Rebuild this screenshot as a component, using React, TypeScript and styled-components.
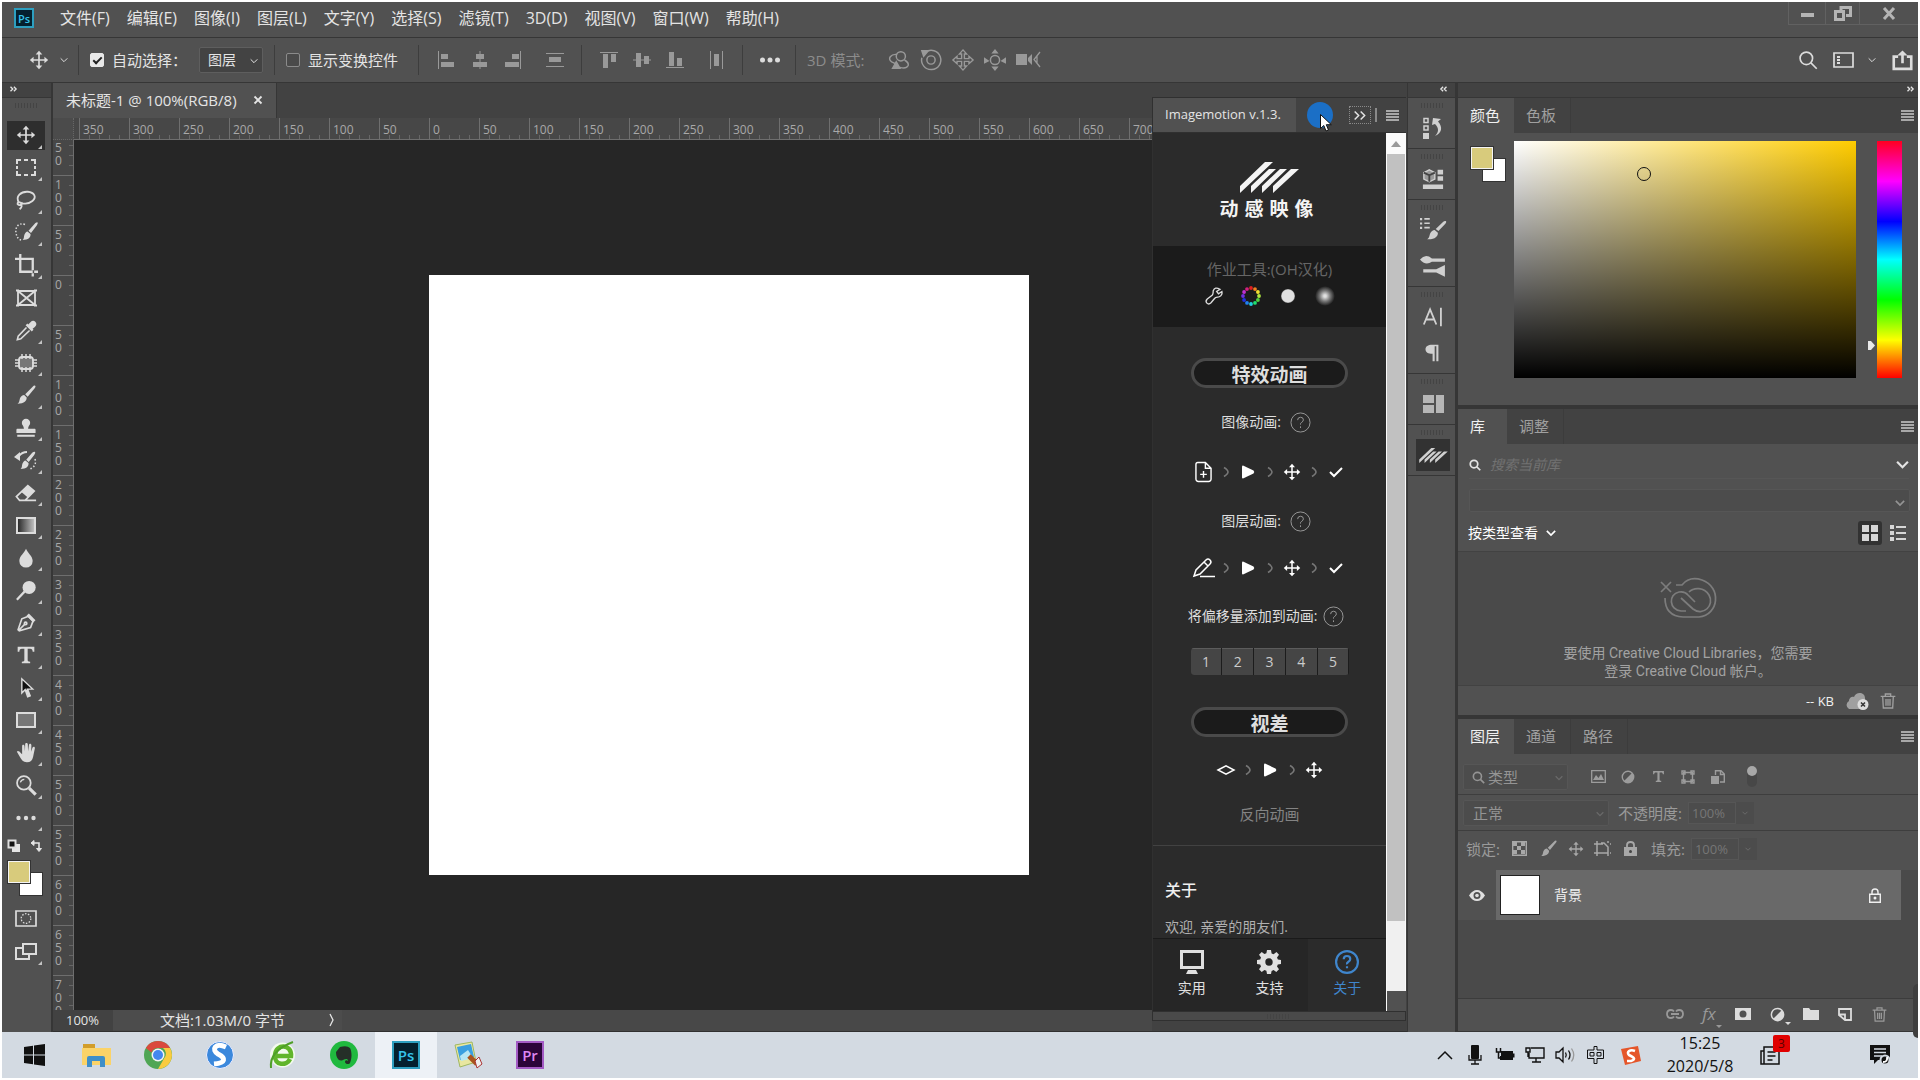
import React from 'react';
import styled, { createGlobalStyle, css } from 'styled-components';

const c = {
  base: '#515151',
  dark: '#424242',
  line: '#363636',
  deep: '#4a4a4a',
  canvas: '#262626',
  text: '#e4e4e4',
  dim: '#9a9a9a',
  faint: '#808080',
  swatch: '#d8cb7c',
};

const Global = createGlobalStyle`
  *, *::before, *::after { box-sizing: border-box; }
  html, body, #root { height: 100%; }
  body {
    margin: 0;
    background: #fff;
    color: ${c.text};
    font: 14px/20px "Open Sans", "Noto Sans CJK SC", sans-serif;
    overflow: hidden;
  }
  button, input, select { font: inherit; color: inherit; margin: 0; padding: 0; border: 0; background: none; border-radius: 0; }
  svg { display: block; flex: none; overflow: visible; }
`;

/* ---------- icon plumbing ---------- */
type IcoProps = { w?: number; h?: number; vb?: string; children: React.ReactNode; stroke?: boolean; sw?: number };
const Ico = ({ w = 20, h, vb = '0 0 24 24', children, stroke, sw = 2 }: IcoProps) => (
  <svg
    width={w}
    height={h ?? w}
    viewBox={vb}
    fill={stroke ? 'none' : 'currentColor'}
    stroke={stroke ? 'currentColor' : 'none'}
    strokeWidth={sw}
    aria-hidden="true"
  >
    {children}
  </svg>
);

const MoveIcon = ({ size = 20 }) => (
  <Ico w={size}>
    <path d="M12 1l4 4.500h-3V11h5.500V8l4.500 4-4.500 4v-3H13v5.500h3L12 23l-4-4.500h3V13H5.500v3L1 12l4.500-4v3H11V5.500H8z" />
  </Ico>
);
const SearchIcon = ({ size = 18, sw = 2 }) => (
  <Ico w={size} stroke sw={sw}>
    <circle cx="10" cy="10" r="7.500" />
    <path d="M15.500 15.500l7 7" />
  </Ico>
);
const Chevron = ({ size = 10, sw = 2 }) => (
  <Ico w={size} vb="0 0 12 12" stroke sw={sw}>
    <path d="M1 3.500l5 5 5-5" />
  </Ico>
);
const MenuIcon = () => (
  <Ico w={13} h={11} vb="0 0 13 11">
    <path d="M0 0h13v2H0zM0 3h13v2H0zM0 6h13v2H0zM0 9h13v2H0z" />
  </Ico>
);
const Double = ({ left = false, size = 7, sw = 1.8 }) => (
  <Ico w={size} h={size - 1} vb="0 0 9 8" stroke sw={sw}>
    {left ? <path d="M4 1L1 4l3 3M8.500 1l-3 3 3 3" /> : <path d="M.5 1l3 3-3 3M5 1l3 3-3 3" />}
  </Ico>
);
const BrushIcon = ({ size = 22 }) => (
  <Ico w={size}>
    <path d="M23 1c.8.8.3 1.800-.6 3L14 14l-3-3 9-9c1-.9 2.200-1.700 3-1z" />
    <path d="M9.800 12l3 3c.3 3.500-2.600 7.500-11 7.500 2.500-1.500 2-3.500 3-6.500.8-2.500 3-4 5-4z" />
  </Ico>
);
const TypeIcon = ({ size = 20 }) => (
  <Ico w={size}>
    <path d="M2 2h20v6h-2c-.3-2.500-.8-3.500-3-3.500h-3V18c0 1.500.6 2 3 2v2H7v-2c2.400 0 3-.5 3-2V4.500H7C4.800 4.500 4.300 5.500 4 8H2z" />
  </Ico>
);
const TrashIcon = ({ size = 16 }) => (
  <Ico w={size} stroke>
    <path d="M1 5h22M8 5V1.500h8V5M4 5l1 17.500h14L20 5M9 9v10M12 9v10M15 9v10" />
  </Ico>
);
const AdjustIcon = ({ size = 15 }) => (
  <Ico w={size}>
    <path d="M12 1a11 11 0 100 22 11 11 0 000-22zm0 2.500c2.400 0 4.400.9 6 2.500L6 18A8.500 8.500 0 0112 3.500z" />
  </Ico>
);
const Stripes = ({ w = 59, h = 31 }) => (
  <Ico w={w} h={h} vb="0 0 59 31">
    <path d="M25 0h8L0 31v-7zM29 7h7L11 31v-7zM40 7h7L22 31v-7zM51 7h8L33 31v-7z" />
  </Ico>
);
const PlayIcon = () => (
  <Ico w={14} vb="0 0 14 14">
    <path d="M2 0.500L12.500 5.500Q14 7 12.500 8.500L2 13.500Q1 13.500 1 12.500V1.500Q1 .5 2 .5z" />
  </Ico>
);
const StepArrow = () => (
  <Ico w={6} h={10} vb="0 0 6 10" stroke sw={1.6}>
    <path d="M1 .5Q5 3 5 5T1 9.500" />
  </Ico>
);
const CheckIcon = () => (
  <Ico w={14} h={10} vb="0 0 14 10" stroke sw={2}>
    <path d="M1 5l4 4 8-8" />
  </Ico>
);
const FileAdd = () => (
  <Ico w={17} h={22} vb="0 0 18 22" stroke sw={1.5}>
    <path d="M3 1h8l6 6v11.500a2.500 2.500 0 01-2.500 2.500h-11A2.500 2.500 0 011 18.500V3a2 2 0 012-2zM11 1v6h6M9 10v7M5.500 13.500h7" />
  </Ico>
);
const PenLine = () => (
  <Ico w={22} h={20} vb="0 0 22 20" stroke sw={1.5}>
    <path d="M1 18l2-6L13 2q2-2 4 0t0 4L7 16zM11 4l4 4M7 18.500h15" />
  </Ico>
);
const Diamond = () => (
  <Ico w={18} h={10} vb="0 0 18 10" stroke sw={1.5}>
    <path d="M1 5l8-4.200L17 5 9 9.200z" />
  </Ico>
);
const Help = ({ size = 21, sw = 1 }) => (
  <Ico w={size} vb="0 0 22 22" stroke sw={sw}>
    <circle cx="11" cy="11" r="10" />
    <path d="M8 8.500q0-3 3-3t3 2.700q0 1.600-1.700 2.600T11 13.200M11 15v1.800" />
  </Ico>
);

/* ---------- shell ---------- */
const Screen = styled.div`
  height: 100vh;
  padding: 2px;
  display: flex;
  flex-direction: column;
`;
const MenuBar = styled.header`
  height: 36px;
  flex: none;
  display: flex;
  align-items: flex-start;
  background: ${c.base};
  border-bottom: 1px solid ${c.line};
`;
const PsLogo = styled.span<{ $size: number; $violet?: boolean }>`
  width: ${p => p.$size}px;
  height: ${p => p.$size}px;
  display: grid;
  place-items: center;
  flex: none;
  font-size: ${p => (p.$size > 22 ? 15 : 11)}px;
  line-height: 1;
  font-weight: 600;
  color: ${p => (p.$violet ? '#dd86f2' : '#35c3ea')};
  background: ${p => (p.$violet ? '#2b0539' : '#04202e')};
  border: 2px solid ${p => (p.$violet ? '#a35bc4' : '#2d9fc0')};
`;
const MenuNav = styled.nav`
  display: flex;
  gap: 17px;
  flex: 1;
  padding: 4px 0 0 14px;
  align-items: center;
`;
const LogoSlot = styled.div`
  padding: 6px 12px 0 12px;
`;
const MenuButton = styled.button`
  font-size: 16px;
  line-height: 24px;
  white-space: nowrap;
`;
const WinControls = styled.div`
  display: grid;
  grid-template-columns: 36px 34px 59px;
  height: 23px;
  color: #b4b4b4;
  border: 1px solid #616161;
  border-top: 0;
  border-right: 0;
`;
const WinButton = styled.button`
  display: grid;
  place-items: center;
  & + & { border-left: 1px solid #616161; }
`;

const Options = styled.div`
  height: 45px;
  flex: none;
  display: flex;
  align-items: center;
  padding: 0 0 0 26px;
  background: ${c.base};
  border-bottom: 1px solid ${c.line};
`;
const Divider = styled.span`
  width: 1px;
  height: 30px;
  background: #3d3d3d;
  flex: none;
`;
const IconButton = styled.button<{ $w?: number; $dim?: boolean }>`
  width: ${p => p.$w ?? 33}px;
  height: 24px;
  flex: none;
  display: grid;
  place-items: center;
  color: ${p => (p.$dim ? '#999' : '#dcdcdc')};
`;
const Tick = styled.label`
  display: flex;
  align-items: center;
  gap: 8px;
  font-size: 15px;
  white-space: nowrap;
`;
const Box = styled.input`
  appearance: none;
  width: 14px;
  height: 14px;
  border: 1px solid #8b8b8b;
  border-radius: 2px;
  background: #4a4a4a;
  display: grid;
  place-items: center;
  &:checked { background: #e8e8e8; border-color: #e8e8e8; }
  &:checked::after {
    content: '';
    width: 9px;
    height: 5px;
    border: solid #222;
    border-width: 0 0 2px 2px;
    transform: translateY(-1px) rotate(-45deg);
  }
`;
const SelectWrap = styled.span<{ $w: number; $h: number; $pad: number; $muted?: boolean }>`
  position: relative;
  display: block;
  width: ${p => p.$w}px;
  height: ${p => p.$h}px;
  flex: none;
  color: ${p => (p.$muted ? '#949494' : c.text)};
  & > select {
    appearance: none;
    display: block;
    width: 100%;
    height: 100%;
    padding: 0 20px 0 ${p => p.$pad}px;
    background: ${p => (p.$muted ? '#4c4c4c' : '#434343')};
    border: 1px solid ${p => (p.$muted ? '#565656' : '#5e5e5e')};
    border-radius: 2px;
  }
  & > svg { position: absolute; right: 5px; top: calc(50% - 3px); pointer-events: none; opacity: ${p => (p.$muted ? 0.4 : 1)}; }
  & > svg:nth-of-type(2) { left: 9px; right: auto; top: calc(50% - 6px); opacity: 1; }
`;
const Group = styled.div<{ $pl?: number; $pr?: number }>`
  display: flex;
  align-items: center;
  padding: 0 ${p => p.$pr ?? 0}px 0 ${p => p.$pl ?? 0}px;
`;
const ModeLabel = styled.span`
  font-size: 15px;
  color: #8c8c8c;
  width: 76px;
  white-space: nowrap;
`;
const Grow = styled.span`
  flex: 1;
`;

const Work = styled.main`
  flex: 1;
  min-height: 0;
  display: flex;
  background: ${c.dark};
`;
const ColumnHead = styled.div<{ $right?: boolean; $pad?: number }>`
  height: 15px;
  flex: none;
  display: flex;
  align-items: center;
  justify-content: ${p => (p.$right ? 'flex-end' : 'flex-start')};
  padding: 0 ${p => p.$pad ?? 4}px 2px 8px;
  background: ${c.dark};
  border-bottom: 1px solid ${c.line};
`;
const Grip = styled.span`
  display: block;
  width: 24px;
  height: 5px;
  margin: 0 auto;
  flex: none;
  background: repeating-linear-gradient(90deg, #444 0 1px, transparent 1px 3px);
`;

/* ---------- tools ---------- */
const Tools = styled.aside`
  width: 51px;
  flex: none;
  display: flex;
  flex-direction: column;
  background: ${c.base};
  border-right: 2px solid ${c.line};
`;
const ToolsGrip = styled.div`
  padding-top: 5px;
`;
const ToolList = styled.div`
  display: grid;
  grid-auto-rows: 1fr;
  height: 715px;
  margin-top: 11px;
  padding: 0 5px;
`;
const ToolButton = styled.button<{ $on?: boolean; $corner?: boolean }>`
  position: relative;
  display: grid;
  place-items: center;
  width: 38px;
  margin: 2px 0;
  color: #dcdcdc;
  background: ${p => (p.$on ? '#2e2e2e' : 'none')};
  ${p =>
    p.$corner &&
    css`
      &::after {
        content: '';
        position: absolute;
        right: 3px;
        bottom: 1px;
        border: 2px solid transparent;
        border-right-color: #c4c4c4;
        border-bottom-color: #c4c4c4;
      }
    `}
`;
const MiniRow = styled.div`
  display: flex;
  justify-content: space-between;
  padding: 6px 9px 8px 6px;
`;
const Swatches = styled.div<{ $ml: number }>`
  display: grid;
  grid-template-columns: 12px 12px 12px;
  grid-template-rows: 12px 12px 12px;
  margin-left: ${p => p.$ml}px;
  align-self: flex-start;
  flex: none;
`;
const Chip = styled.button<{ $front?: boolean }>`
  grid-area: ${p => (p.$front ? '1 / 1 / 3 / 3' : '2 / 2 / 4 / 4')};
  background: ${p => (p.$front ? c.swatch : '#fff')};
  border: 1px solid #333;
  box-shadow: ${p => (p.$front ? 'inset 0 0 0 1px #f4f4f4' : 'none')};
`;
const ToolFoot = styled.div`
  display: grid;
  grid-auto-rows: 33px;
  padding: 6px 5px;
`;

/* ---------- document ---------- */
const Doc = styled.section`
  flex: 1;
  min-width: 0;
  display: flex;
  flex-direction: column;
`;
const TabStrip = styled.div`
  height: 35px;
  flex: none;
  display: flex;
  background: ${c.dark};
`;
const DocTab = styled.div`
  display: flex;
  align-items: center;
  gap: 17px;
  padding: 0 14px 2px 13px;
  background: ${c.base};
  font-size: 15px;
  border-right: 1px solid ${c.line};
  white-space: nowrap;
`;
const Board = styled.div`
  flex: 1;
  min-height: 0;
  display: grid;
  grid-template: 22px minmax(0, 1fr) / 21px minmax(0, 1fr);
`;
const Corner = styled.div`
  background: #4b4b4b;
  border-right: 1px dotted #666;
  border-bottom: 1px dotted #666;
`;
const RulerTop = styled.div`
  display: flex;
  padding-left: 5px;
  overflow: hidden;
  background: #474747;
  border-bottom: 1px solid #6e6e6e;
  color: #a8a8a8;
  font-size: 12px;
`;
const MarkX = styled.span`
  width: 50px;
  flex: none;
  padding-left: 3px;
  line-height: 24px;
  border-left: 1px solid #6e6e6e;
  background: repeating-linear-gradient(90deg, transparent 0 9px, #666 9px 10px) 0 100% / 100% 4px no-repeat;
`;
const RulerLeft = styled.div`
  overflow: hidden;
  background: #474747;
  border-right: 1px solid #6e6e6e;
  color: #a8a8a8;
  font-size: 12px;
`;
const MarksY = styled.div`
  margin-top: -15px;
`;
const MarkY = styled.div`
  height: 50px;
  padding: 2px 0 0 2px;
  border-top: 1px solid #6e6e6e;
  background: repeating-linear-gradient(180deg, transparent 0 9px, #666 9px 10px) 100% 0 / 4px 100% no-repeat;
  & > span { display: block; width: 8px; line-height: 13px; word-break: break-all; }
`;
const Canvas = styled.div`
  background: ${c.canvas};
  padding: 135px 0 0 355px;
  overflow: hidden;
`;
const Artboard = styled.div`
  width: 600px;
  height: 600px;
  background: #fff;
`;
const Status = styled.footer`
  height: 22px;
  flex: none;
  display: flex;
  align-items: flex-start;
  background: #484848;
  border-bottom: 1px solid #303030;
`;
const Zoom = styled.span`
  width: 60px;
  height: 21px;
  padding-left: 13px;
  background: ${c.dark};
  font-size: 13px;
`;
const DocInfo = styled.button`
  width: 229px;
  height: 20px;
  display: flex;
  align-items: center;
  justify-content: space-between;
  padding: 0 8px 0 47px;
  background: #4c4c4c;
  font-size: 15px;
`;

/* ---------- Imagemotion panel ---------- */
const Floating = styled.section`
  width: 255px;
  flex: none;
  display: flex;
  flex-direction: column;
  padding: 14px 1px 10px 0;
  background: ${c.dark};
  border-bottom: 1px solid #303030;
`;
const FloatHead = styled.div`
  height: 36px;
  flex: none;
  display: flex;
  align-items: center;
  border: 1px solid #303030;
  border-right: 0;
  background: ${c.dark};
`;
const FloatTab = styled.div`
  width: 143px;
  height: 100%;
  padding: 0 0 0 12px;
  font-size: 13px;
  line-height: 33px;
  background: ${c.base};
  white-space: nowrap;
`;
const Pointer = styled.div`
  position: relative;
  width: 26px;
  height: 26px;
  margin: 0 16px 0 11px;
  border-radius: 50%;
  background: #1b6fc6;
  & > svg { position: absolute; left: 13px; top: 12px; z-index: 2; }
`;
const MoreButton = styled.button`
  width: 22px;
  height: 18px;
  display: grid;
  place-items: center;
  border: 1px dotted #8a8a8a;
`;
const Bar = styled.span`
  width: 2px;
  height: 14px;
  margin: 0 9px 0 4px;
  background: #8a8a8a;
`;
const FloatMenu = styled.button`
  color: #a8a8a8;
`;
const FloatBody = styled.div`
  flex: 1;
  min-height: 0;
  display: flex;
  background: #2b2b2b;
  border-left: 1px solid #303030;
`;
const FloatMain = styled.div`
  flex: 1;
  display: flex;
  flex-direction: column;
  min-width: 0;
`;
const Scroll = styled.div`
  flex: 1;
  min-height: 0;
  overflow: hidden;
  display: flex;
  flex-direction: column;
  align-items: center;
`;
const Brand = styled.div`
  height: 113px;
  flex: none;
  padding-top: 29px;
  color: #f4f4f4;
  display: flex;
  flex-direction: column;
  align-items: center;
  gap: 4px;
`;
const BrandName = styled.div`
  display: flex;
  gap: 6px;
  padding-right: 6px;
  font-size: 19px;
  line-height: 24px;
  font-weight: 700;
`;
const ToolStrip = styled.div`
  align-self: stretch;
  height: 81px;
  flex: none;
  padding-top: 12px;
  background: #1b1b1b;
  text-align: center;
  color: #666;
  font-size: 15px;
  line-height: 22px;
`;
const StripIcons = styled.div`
  display: grid;
  grid-template-columns: repeat(4, 37px);
  justify-content: center;
  margin-top: 6px;
`;
const StripButton = styled.button`
  height: 20px;
  display: grid;
  place-items: center;
  color: #ddd;
`;
const Dot = styled.span<{ $soft?: boolean }>`
  width: ${p => (p.$soft ? 20 : 14)}px;
  height: ${p => (p.$soft ? 20 : 14)}px;
  border-radius: 50%;
  background: ${p => (p.$soft ? 'radial-gradient(#e0e0e0 8%, #777 38%, transparent 70%)' : 'radial-gradient(#e0e0e0 60%, #888 72%)')};
`;
const Pill = styled.button<{ $mt: number }>`
  width: 157px;
  height: 30px;
  flex: none;
  margin-top: ${p => p.$mt}px;
  padding-top: 1px;
  border: 3px solid #4a4a4a;
  border-radius: 15px;
  background: #1b1b1b;
  color: #dedede;
  font-size: 19px;
  line-height: 26px;
  font-weight: 700;
`;
const Caption = styled.div<{ $mt: number; $gap: number }>`
  height: 22px;
  flex: none;
  display: flex;
  align-items: center;
  gap: ${p => p.$gap}px;
  margin-top: ${p => p.$mt}px;
  padding-right: 7px;
  color: #dedede;
  white-space: nowrap;
  & > button { color: #9a9a9a; }
`;
const Steps = styled.div<{ $mt: number }>`
  height: 24px;
  flex: none;
  display: grid;
  grid-auto-flow: column;
  grid-auto-columns: 22px;
  margin-top: ${p => p.$mt}px;
  color: #fff;
  & > * { display: grid; place-items: center; }
  & > span { color: #777; }
`;
const Numbers = styled.div`
  width: 158px;
  height: 27px;
  flex: none;
  display: grid;
  grid-template-columns: repeat(5, 1fr);
  gap: 1px;
  margin-top: 21px;
  border-radius: 3px;
  overflow: hidden;
  background: #1c1c1c;
  & > button { background: #454545; border-top: 1px solid #5c5c5c; line-height: 22px; color: #ccc; }
`;
const Reverse = styled.button`
  margin-top: 21px;
  height: 22px;
  flex: none;
  font-size: 15px;
  color: #838383;
`;
const About = styled.section`
  align-self: stretch;
  flex: none;
  margin-top: 20px;
  padding: 33px 12px 0;
  border-top: 1px solid #424242;
  & > h2 { margin: 0 0 15px; font-size: 16px; line-height: 22px; font-weight: 500; color: #f0f0f0; }
  & > p { margin: 0; line-height: 22px; color: #b0b0b0; white-space: nowrap; }
`;
const BottomNav = styled.nav`
  height: 73px;
  flex: none;
  display: grid;
  grid-template-columns: repeat(3, 1fr);
  background: #262626;
  border-top: 1px solid #1a1a1a;
`;
const NavButton = styled.button<{ $on?: boolean }>`
  display: flex;
  flex-direction: column;
  align-items: center;
  padding-top: 11px;
  gap: 4px;
  color: ${p => (p.$on ? '#3f86cd' : '#e0e0e0')};
  background: ${p => (p.$on ? '#2b2b2b' : 'none')};
`;
const ScrollTrack = styled.div`
  width: 20px;
  flex: none;
  display: flex;
  flex-direction: column;
  align-items: center;
  background: #fafafa;
`;
const ArrowUp = styled.span`
  height: 21px;
  display: grid;
  place-items: center;
  color: #999;
`;
const Thumb = styled.span`
  flex: 1;
  width: 18px;
  background: #c1c1c1;
`;
const TrackEnd = styled.span`
  width: 18px;
  height: 70px;
  background: #f0f0f0;
`;
const TrackCorner = styled.span`
  align-self: flex-end;
  width: 19px;
  height: 20px;
  background: ${c.base};
`;
const FloatFoot = styled.div`
  height: 10px;
  flex: none;
  padding-top: 2px;
  background: #4a4a4a;
  border: 1px solid #303030;
`;

/* ---------- icon dock ---------- */
const Dock = styled.aside`
  width: 51px;
  flex: none;
  display: flex;
  flex-direction: column;
  background: ${c.base};
  border-left: 1px solid ${c.line};
  border-right: 3px solid ${c.line};
`;
const DockGroup = styled.div`
  display: flex;
  flex-direction: column;
  align-items: center;
  gap: 4px;
  flex: none;
  padding: 5px 0 4px 3px;
  border-bottom: 1px solid ${c.line};
`;
const DockButton = styled.button<{ $on?: boolean }>`
  width: 34px;
  height: 32px;
  display: grid;
  place-items: center;
  color: #d0d0d0;
  background: ${p => (p.$on ? '#323232' : 'none')};
`;

/* ---------- right panels ---------- */
const Panels = styled.aside`
  width: 460px;
  flex: none;
  display: flex;
  flex-direction: column;
  background: ${c.base};
`;
const Panel = styled.section<{ $h?: number }>`
  ${p => (p.$h ? `height: ${p.$h}px; flex: none;` : 'flex: 1; min-height: 0;')}
  display: flex;
  flex-direction: column;
  border-bottom: ${p => (p.$h ? 4 : 1)}px solid ${c.line};
`;
const PanelTabs = styled.div`
  height: 35px;
  flex: none;
  display: flex;
  align-items: center;
  padding-right: 4px;
  background: ${c.dark};
`;
const PanelTab = styled.button<{ $on?: boolean }>`
  height: 100%;
  min-width: 49px;
  padding: 0 14px 2px 12px;
  text-align: left;
  font-size: 15px;
  color: ${p => (p.$on ? '#f0f0f0' : '#a0a0a0')};
  background: ${p => (p.$on ? c.base : c.dark)};
  ${p => !p.$on && 'border-right: 1px solid #3c3c3c;'}
`;
const MenuBtn = styled.button`
  margin-left: auto;
  color: #a8a8a8;
`;
const ColorBody = styled.div`
  flex: 1;
  display: flex;
  padding: 8px 16px 27px 12px;
`;
const SwatchSlot = styled.div`
  width: 44px;
  flex: none;
  padding-top: 5px;
`;
const Field = styled.div`
  position: relative;
  flex: 1;
  background: linear-gradient(to bottom, transparent, #000), linear-gradient(to right, #fff, #ffcc00);
`;
const Ring = styled.span`
  position: absolute;
  left: 38%;
  top: 14%;
  transform: translate(-50%, -50%);
  width: 14px;
  height: 14px;
  border: 1px solid #111;
  border-radius: 50%;
`;
const HueMark = styled.span`
  width: 21px;
  display: flex;
  align-items: flex-end;
  justify-content: flex-end;
  padding: 0 2px 28px 0;
  color: #e8e8e8;
`;
const Hue = styled.div`
  width: 25px;
  background: linear-gradient(to bottom, #ff0020, #ff00ff 17%, #0000ff 34%, #00ffff 50%, #00ff00 67%, #ffff00 84%, #ff0000);
`;
const LibSearch = styled.label`
  height: 35px;
  flex: none;
  display: flex;
  align-items: center;
  gap: 9px;
  margin: 0 9px 0 11px;
  padding-top: 7px;
  border-bottom: 1px solid #565656;
  & > input { flex: 1; min-width: 0; font-style: italic; outline: 0; }
  & > input::placeholder { color: #727272; opacity: 1; }
`;
const LibSelect = styled.div`
  margin: 10px 8px 9px 11px;
  & > span { width: 100%; }
  & > span > svg { opacity: 1; }
`;
const LibView = styled.div`
  height: 24px;
  flex: none;
  display: flex;
  align-items: center;
  margin: 0 8px 6px 10px;
  & > button:first-child { display: flex; align-items: center; gap: 8px; color: #fff; }
`;
const ViewButton = styled.button<{ $on?: boolean }>`
  width: 24px;
  height: 24px;
  margin-left: 4px;
  display: grid;
  place-items: center;
  border-radius: 3px;
  color: #d6d6d6;
  background: ${p => (p.$on ? '#323232' : 'none')};
`;
const LibEmpty = styled.div`
  flex: 1;
  padding-top: 26px;
  display: flex;
  flex-direction: column;
  align-items: center;
  gap: 26px;
  background: ${c.deep};
  border: solid #424242;
  border-width: 1px 0;
  color: #7c7c7c;
  & > p {
    margin: 0;
    text-align: center;
    font-family: Roboto, "Noto Sans CJK SC", sans-serif;
    line-height: 18px;
    color: #a2a2a2;
    white-space: nowrap;
  }
`;
const LibFoot = styled.div`
  height: 29px;
  flex: none;
  display: flex;
  align-items: center;
  justify-content: flex-end;
  gap: 11px;
  padding: 0 22px 0 0;
  font-size: 13px;
  color: #f0f0f0;
  & > button { color: #a0a0a0; }
`;
const Row = styled.div<{ $h: number; $line?: boolean; $pt?: number; $pb?: number }>`
  height: ${p => p.$h}px;
  flex: none;
  display: flex;
  align-items: center;
  padding: ${p => p.$pt ?? 0}px 5px ${p => p.$pb ?? 0}px;
  color: ${c.dim};
  font-size: 15px;
  ${p => p.$line && 'border-bottom: 1px solid #3e3e3e;'}
`;
const FilterIcons = styled.div`
  display: grid;
  grid-template-columns: repeat(5, 30px) 38px;
  justify-items: center;
  margin-left: 15px;
  align-items: center;
  color: #9c9c9c;
`;
const Toggle = styled.input`
  appearance: none;
  width: 10px;
  height: 21px;
  border-radius: 5px;
  background: #474747;
  &::before { content: ''; display: block; width: 10px; height: 10px; border-radius: 50%; background: #a8a8a8; }
`;
const Amount = styled.label<{ $ml: number }>`
  display: flex;
  align-items: center;
  gap: 6px;
  margin-left: ${p => p.$ml}px;
  white-space: nowrap;
  & > input {
    width: 48px;
    height: 22px;
    padding: 0 3px;
    font-size: 13px;
    color: #767676;
    background: #4c4c4c;
    border: 1px solid #565656;
  }
`;
const Spin = styled.button`
  width: 18px;
  height: 22px;
  display: grid;
  place-items: center;
  color: #6a6a6a;
  background: #4c4c4c;
`;
const LockIcons = styled.div`
  display: grid;
  grid-template-columns: 28px 28px 26px 30px 27px;
  align-items: center;
  margin-left: 12px;
  color: #a8a8a8;
`;
const Layers = styled.div`
  flex: 1;
  background: ${c.deep};
  border-bottom: 1px solid #3c3c3c;
`;
const Layer = styled.div`
  height: 50px;
  display: flex;
  align-items: stretch;
  margin-right: 17px;
  background: ${c.base};
`;
const Eye = styled.button`
  width: 38px;
  display: grid;
  place-items: center;
  color: #e0e0e0;
`;
const LayerFace = styled.div`
  flex: 1;
  display: flex;
  align-items: center;
  gap: 14px;
  padding: 0 20px 0 4px;
  background: #696969;
  color: #f0f0f0;
`;
const LayerThumb = styled.span`
  width: 40px;
  height: 40px;
  background: #fff;
  border: 1px solid #222;
`;
const LayerFoot = styled.div`
  height: 32px;
  flex: none;
  display: grid;
  grid-template-columns: repeat(7, 34px);
  justify-content: end;
  padding: 0 22px 2px 0;
  & > button { height: auto; width: auto; }
`;
const Fx = styled.em`
  font: italic 17px/20px "Open Sans", sans-serif;
`;
const WithArrow = styled.span`
  position: relative;
  &::after {
    content: '';
    position: absolute;
    right: -6px;
    bottom: -3px;
    border: 3px solid transparent;
    border-top-color: currentColor;
    border-bottom: 0;
  }
`;
const EdgeHandle = styled.span`
  position: fixed;
  right: 2px;
  bottom: 42px;
  width: 5px;
  height: 54px;
  border-radius: 5px 0 0 5px;
  background: #3f3f3f;
`;

/* ---------- taskbar ---------- */
const Taskbar = styled.footer`
  height: 46px;
  flex: none;
  display: flex;
  align-items: center;
  padding-left: 1px;
  background: #d3dae2;
  color: #111;
`;
const App62 = styled.button<{ $on?: boolean }>`
  width: 62px;
  height: 100%;
  display: grid;
  place-items: center;
  background: ${p => (p.$on ? '#edf1f6' : 'none')};
`;
const Tray = styled.div`
  margin-left: auto;
  height: 100%;
  display: grid;
  grid-template-columns: repeat(6, 30px) 42px;
  align-items: center;
  & > button { display: grid; place-items: center; }
`;
const Clock = styled.time`
  width: 96px;
  font-size: 16px;
  line-height: 23px;
  text-align: center;
`;
const News = styled.button`
  position: relative;
  margin: 0 0 0 12px;
`;
const Badge = styled.span`
  position: absolute;
  left: 13px;
  top: -11px;
  width: 17px;
  height: 17px;
  border-radius: 2px;
  background: #e00000;
  color: #5a0000;
  font-size: 12px;
  line-height: 17px;
`;
const Notice = styled.button`
  margin: 0 28px 0 90px;
`;

const menus = ['文件(F)', '编辑(E)', '图像(I)', '图层(L)', '文字(Y)', '选择(S)', '滤镜(T)', '3D(D)', '视图(V)', '窗口(W)', '帮助(H)'];

const tools: { name: string; icon: React.ReactNode; plain?: boolean }[] = [
  { name: '移动', icon: <MoveIcon size={20} /> },
  { name: '矩形选框', icon: <Ico w={20} h={17} vb="0 0 20 17" stroke><path d="M1 5V1h4M8 1h4M15 1h4v4M19 7v3M19 12v4h-4M12 16H8M5 16H1v-4M1 10V7" /></Ico> },
  { name: '套索', icon: <Ico w={22} stroke><path d="M4.500 15C-.5 8 7 2.500 14 3s10 6 5 10-11 3.500-14 1.500c-2.500-.5-3 2-1 2.800s5-1 3-2.500M6 16q3 3-1 6" /></Ico> },
  { name: '快速选择', icon: <Ico w={24}><path d="M23.500 1.500c.6.600 0 1.800-.8 3L17 12l-2.500-2.200L20.500 3c1-1 2.300-2 3-1.500zM13.500 10.500l3 2.600c.5 3-2 6-8 6 2-1.500 1-3 2-5.500.6-1.800 1.800-2.900 3-3.100z" /><path d="M11 3.500C4 1 1 7 2 12s3 7 6 7" fill="none" stroke="currentColor" strokeWidth="1.500" strokeDasharray="1.500 1.800" /></Ico> },
  { name: '裁剪', icon: <Ico w={23} stroke sw={2.4}><path d="M0 5h18.500v12M5.500 0v18.500h13M20 18.500h4M18.500 20v3.500" /></Ico> },
  { name: '图框', icon: <Ico w={21} h={18} vb="0 0 21 18" stroke sw={1.8}><path d="M2 2h17v14H2zM2 2l17 14M19 2L2 16" /><path d="M0 1.500h3M18 1.500h3M0 16.500h3M18 16.500h3" /></Ico>, plain: true },
  { name: '吸管', icon: <Ico w={21}><path d="M22 2c2 2 1.500 4-.5 6L19 10l1 1-2 2-7-7 2-2 1 1 2.500-2.500C18.500.5 20.500.5 22 2z" /><path d="M12 8.500l-9.500 10L1.500 22.500 5.500 21.500 15.500 12" fill="none" stroke="currentColor" strokeWidth="1.800" /></Ico> },
  { name: '修补', icon: <Ico w={22} h={20} vb="0 0 22 20" stroke sw={1.8}><rect x="4" y="4" width="14" height="12" rx="3" fill="#777" /><path d="M7 1v5M11 1v5M15 1v5M7 14v5M11 14v5M15 14v5M0 7h5M0 10h5M0 13h5M17 7h5M17 10h5M17 13h5" strokeWidth="1.500" /></Ico> },
  { name: '画笔', icon: <BrushIcon size={20} /> },
  { name: '仿制图章', icon: <Ico w={20}><path d="M12 1a5 5 0 015 5c0 2.500-2.500 3.500-2.500 7H22c1 0 1.500.5 1.500 1.500V18H.5v-3.500C.5 13.500 1 13 2 13h7.500c0-3.500-2.500-4.500-2.500-7a5 5 0 015-5zM1.500 20h21v2.500h-21z" /></Ico> },
  { name: '历史记录画笔', icon: <Ico w={24}><path d="M21 4c.6.600 0 1.800-.8 3l-5.500 7-2.500-2.200 6-7C19.200 4 20.300 3.500 21 4zM11.500 12.500l3 2.600c.5 3-2 6-8 6 2-1.500 1-3 2-5.500.6-1.800 1.800-2.900 3-3.100zM0 9l6-5v9z" /><path d="M5 8q3-4 8-4" fill="none" stroke="currentColor" strokeWidth="2" /><path d="M21 11q2 7-5 10" fill="none" stroke="currentColor" strokeWidth="1.500" strokeDasharray="1.500 2" /></Ico> },
  { name: '橡皮擦', icon: <Ico w={22}><path d="M14 4l7 6-7 7-7-6z" /><path d="M14 4l7 6-10 10H5l-3.500-4zM11 20h12" fill="none" stroke="currentColor" strokeWidth="1.800" /></Ico> },
  { name: '渐变', icon: <svg width="20" height="17" aria-hidden="true"><defs><linearGradient id="grad"><stop stopColor="#222" /><stop offset="1" stopColor="#c8c8c8" /></linearGradient></defs><rect x="1" y="1" width="18" height="15" fill="url(#grad)" stroke="#dcdcdc" strokeWidth="2" /></svg> },
  { name: '模糊', icon: <Ico w={20}><path d="M12 1c2 5 8 9 8 14.500a8 8 0 01-16 0C4 10 10 6 12 1z" /></Ico> },
  { name: '减淡', icon: <Ico w={21}><circle cx="15" cy="8.500" r="7.500" /><path d="M10 13l-9 9.500" stroke="currentColor" strokeWidth="2.600" /></Ico> },
  { name: '钢笔', icon: <Ico w={20} stroke sw={2}><path d="M15 4l5.500 5.500-3 8L4 21.500l-1.500-1.500L7 7zM3 21l8-8" /><circle cx="11.500" cy="12.500" r="1.500" /><path d="M14 2l8 8" strokeWidth="4" /></Ico> },
  { name: '文字', icon: <TypeIcon size={20} /> },
  { name: '路径选择', icon: <Ico w={20}><path d="M7 1v17l4-4 3 8.500 3-1.200-3.200-8H20z" fill="#111" stroke="currentColor" strokeWidth="1.700" /><path d="M11 14l3.500 8.500 3-1.200L14 13.500z" /></Ico> },
  { name: '矩形', icon: <svg width="20" height="16" aria-hidden="true"><rect x="1" y="1" width="18" height="14" fill="#777" stroke="#dcdcdc" strokeWidth="2" /></svg> },
  { name: '抓手', icon: <Ico w={21}><path d="M1 11c1-1.500 3-.5 4.500 1.500L7 14V4.500c0-2 2.500-2 2.700 0l.5 6L10.500 2.500c0-2 2.800-2 3 0l.3 8 1-7c.3-2 2.900-1.800 2.800.4L17.300 11l1.500-4.500c.8-2 3.200-1.300 2.700.8L19.500 17c-.8 4-3 6-7 6-4.500 0-6-2.500-7.500-5z" /></Ico> },
  { name: '缩放', icon: <Ico w={21} stroke sw={2}><circle cx="9" cy="9" r="7.800" /><path d="M5 8.500Q6 5 9.500 5" strokeWidth="1.500" /><path d="M15 15l7.500 7.500" strokeWidth="3.600" /></Ico> },
  { name: '编辑工具栏', icon: <Ico w={20} h={6} vb="0 0 20 6"><circle cx="2.500" cy="3" r="2.200" /><circle cx="10" cy="3" r="2.200" /><circle cx="17.500" cy="3" r="2.200" /></Ico> },
];

const AlignIcon = ({ d }: { d: string }) => <Ico w={18} vb="0 0 18 18"><path d={d} /></Ico>;
const alignA = [
  ['左对齐', 'M0 0h1v18H0zM3 3h7v5H3zM3 11h13v5H3z'],
  ['水平居中', 'M8.500 0h1v18h-1zM5 3h8v5H5zM2 11h14v5H2z'],
  ['右对齐', 'M16 0h1v18h-1zM8 3h7v5H8zM1 11h14v5H1z'],
];
const alignB = [
  ['顶对齐', 'M0 1h18v1H0zM3 3h5v14H3zM11 3h5v8h-5z'],
  ['垂直居中', 'M0 8.500h18v1H0zM3 2h5v14H3zM11 5h5v8h-5z'],
  ['底对齐', 'M0 16h18v1H0zM3 1h5v14H3zM11 7h5v8h-5z'],
];

const rulerX = [350, 300, 250, 200, 150, 100, 50, 0, 50, 100, 150, 200, 250, 300, 350, 400, 450, 500, 550, 600, 650, 700];
const rulerY = [150, 100, 50, 0, 50, 100, 150, 200, 250, 300, 350, 400, 450, 500, 550, 600, 650, 700];

const ringColors = ['#e02020', '#f08020', '#f0e030', '#b0e840', '#50d040', '#20e070', '#20d0e0', '#2080f0', '#2030e0', '#7030e0', '#c030d0', '#d02080'];

const ToolsBar = () => (
  <Tools>
    <ColumnHead><Double /></ColumnHead>
    <ToolsGrip><Grip /></ToolsGrip>
    <ToolList>
      {tools.map((t, i) => (
        <ToolButton key={t.name} aria-label={t.name} $on={i === 0} $corner={!t.plain}>{t.icon}</ToolButton>
      ))}
    </ToolList>
    <MiniRow>
      <Ico w={12} vb="0 0 12 12"><path d="M4 4h8v8H4z" /><path d="M.5.500h7v7h-7z" fill="#111" stroke="#ddd" /></Ico>
      <Ico w={12} vb="0 0 12 12" stroke sw={1.600}><path d="M2 3h7v7" /><path d="M4 .5L1 3l3 2.500zM6.500 8.500L9 11.500l2.500-3z" fill="currentColor" strokeWidth="1" /></Ico>
    </MiniRow>
    <Swatches $ml={5}>
      <Chip aria-label="背景色" />
      <Chip $front aria-label="前景色" />
    </Swatches>
    <ToolFoot>
      <ToolButton aria-label="快速蒙版"><Ico w={22} h={17} vb="0 0 22 17" stroke sw={1.700}><path d="M1 1h20v15H1z" /><circle cx="11" cy="8.500" r="4.800" strokeDasharray="1.500 1.500" strokeWidth="1.300" /></Ico></ToolButton>
      <ToolButton $corner aria-label="屏幕模式"><Ico w={22} h={17} vb="0 0 22 17" stroke sw={2}><path d="M8 5H1v11h13v-4M8 1h13v10H8z" /></Ico></ToolButton>
    </ToolFoot>
  </Tools>
);

const OptionsBar = () => (
  <Options>
    <IconButton $w={22} aria-label="移动工具"><MoveIcon size={20} /></IconButton>
    <IconButton $w={28} aria-label="预设"><Chevron size={8} sw={1.500} /></IconButton>
    <Divider />
    <Group $pl={11} $pr={12}><Tick><Box type="checkbox" defaultChecked />自动选择：</Tick></Group>
    <SelectWrap $w={64} $h={26} $pad={8}>
      <select aria-label="自动选择对象"><option>图层</option></select>
      <Chevron size={8} sw={1.5} />
    </SelectWrap>
    <Group $pl={11}><Divider /></Group>
    <Group $pl={11} $pr={20}><Tick><Box type="checkbox" />显示变换控件</Tick></Group>
    <Divider />
    <Group $pl={11} $pr={9}>
      {alignA.map(([n, d]) => <IconButton key={n} $dim aria-label={n}><AlignIcon d={d} /></IconButton>)}
    </Group>
    <IconButton $dim aria-label="垂直分布"><AlignIcon d="M0 2h18v1H0zM3 6h12v5H3zM0 15h18v1H0z" /></IconButton>
    <Group $pl={10}><Divider /></Group>
    <Group $pl={10} $pr={9}>
      {alignB.map(([n, d]) => <IconButton key={n} $dim aria-label={n}><AlignIcon d={d} /></IconButton>)}
    </Group>
    <IconButton $dim aria-label="水平分布"><AlignIcon d="M2 0h1v18H2zM6 3h5v12H6zM14 0h1v18h-1z" /></IconButton>
    <Group $pl={9}><Divider /></Group>
    <Group $pl={10} $pr={9}>
      <IconButton aria-label="更多"><Ico w={20} h={6} vb="0 0 20 6"><circle cx="2.500" cy="3" r="2.500" /><circle cx="10" cy="3" r="2.500" /><circle cx="17.500" cy="3" r="2.500" /></Ico></IconButton>
    </Group>
    <Divider />
    <Group $pl={11}>
      <ModeLabel>3D 模式:</ModeLabel>
      <IconButton $dim $w={32} aria-label="旋转"><Ico w={22} stroke sw={1.600}><circle cx="14" cy="8" r="5" /><path d="M10 6C3 5-1 11 4 14l4 2M18 12q5 3 4 6-2 4-9 2" /><path d="M5 21l4-7 4 7z" fill="currentColor" /></Ico></IconButton>
      <IconButton $dim $w={32} aria-label="滚动"><Ico w={22} stroke sw={1.600}><circle cx="12" cy="12" r="4.500" /><path d="M6 3.500a10.500 10.500 0 11-4 6" /><path d="M2 2l7 0-5 6z" fill="currentColor" /></Ico></IconButton>
      <IconButton $dim $w={32} aria-label="拖动"><Ico w={22} stroke sw={1.500}><path d="M12 1l4 4.500h-2.500v5h5V8l4.500 4-4.500 4v-2.500h-5v5H16L12 23l-4-4.500h2.500v-5h-5V16L1 12l4.500-4v2.500h5v-5H8z" /></Ico></IconButton>
      <IconButton $dim $w={32} aria-label="滑动"><Ico w={22}><circle cx="12" cy="12" r="5" fill="none" stroke="currentColor" strokeWidth="1.600" /><path d="M12 0l4 5H8zM12 24l4-5H8zM0 9l6 4-6 3zM24 9l-6 4 6 3z" /></Ico></IconButton>
      <IconButton $dim $w={34} aria-label="缩放相机"><Ico w={24}><path d="M0 6h11v11H0zM16 6v11l-4-4v-3z" /><path d="M24 4l-6 7.500 6 7.500M21 8v7" fill="none" stroke="currentColor" strokeWidth="1.300" /></Ico></IconButton>
    </Group>
    <Grow />
    <IconButton $w={42} aria-label="搜索"><SearchIcon size={20} /></IconButton>
    <IconButton $w={28} aria-label="工作区"><Ico w={21} h={16} vb="0 0 21 16" stroke sw={1.700}><path d="M1 1h19v14H1z" /><path d="M5.500 4v8" strokeWidth="3" strokeDasharray="2 1" /></Ico></IconButton>
    <IconButton $w={30} aria-label="切换工作区"><Chevron size={8} sw={1.500} /></IconButton>
    <IconButton $w={31} aria-label="共享"><Ico w={21} stroke sw={3}><path d="M7 7.500H2v14h20v-14h-5M12 15V3" /><path d="M8 5.500l4-4 4 4z" fill="currentColor" strokeWidth="1.500" /></Ico></IconButton>
  </Options>
);

const Document = () => (
  <Doc>
    <TabStrip>
      <DocTab>未标题-1 @ 100%(RGB/8) <button aria-label="关闭"><Ico w={8} vb="0 0 8 8" stroke sw={1.800}><path d="M.5.500l7 7M7.500.500l-7 7" /></Ico></button></DocTab>
    </TabStrip>
    <Board>
      <Corner />
      <RulerTop>{rulerX.map((n, i) => <MarkX key={i}>{n}</MarkX>)}</RulerTop>
      <RulerLeft><MarksY>{rulerY.map((n, i) => <MarkY key={i}><span>{n}</span></MarkY>)}</MarksY></RulerLeft>
      <Canvas><Artboard /></Canvas>
    </Board>
    <Status>
      <Zoom>100%</Zoom>
      <DocInfo>文档:1.03M/0 字节 <Ico w={5} h={12} vb="0 0 5 12" stroke sw={1.300}><path d="M1 0l3 6-3 6" /></Ico></DocInfo>
    </Status>
  </Doc>
);

const StepRow = ({ mt, icons }: { mt: number; icons: [string, React.ReactNode][] }) => (
  <Steps $mt={mt}>
    {icons.map(([n, icon], i) => (
      <React.Fragment key={n}>
        {i > 0 && <span><StepArrow /></span>}
        <button aria-label={n}>{icon}</button>
      </React.Fragment>
    ))}
  </Steps>
);

const Imagemotion = () => (
  <Floating>
    <FloatHead>
      <FloatTab>Imagemotion v.1.3.</FloatTab>
      <Pointer><svg width="13" height="18" viewBox="0 0 13 18" aria-hidden="true"><path d="M.5.500v14l3.300-3 2.200 5.500 2.500-1-2.200-5.300h5z" fill="#fff" stroke="#111" /></svg></Pointer>
      <MoreButton aria-label="更多面板"><Double size={12} sw={1.1} /></MoreButton>
      <Bar />
      <FloatMenu aria-label="面板菜单"><MenuIcon /></FloatMenu>
    </FloatHead>
    <FloatBody>
      <FloatMain>
        <Scroll>
          <Brand>
            <Stripes />
            <BrandName><span>动</span><span>感</span><span>映</span><span>像</span></BrandName>
          </Brand>
          <ToolStrip>
            作业工具:(OH汉化)
            <StripIcons>
              <StripButton aria-label="设置"><Ico w={18} stroke sw={1.800}><path d="M20 3q-7-4-9 2c-.5 3 .5 4-1.500 6L3 16q-3 3-.5 5.500T8 21l5-6c1.500-2 4-1 6-2 4-2 4-5 3.500-7l-4.500 3-2.500-3z" /></Ico></StripButton>
              <StripButton aria-label="颜色"><svg width="20" height="20" viewBox="-10 -10 20 20" aria-hidden="true">{ringColors.map((k, i) => <circle key={k} cx={8 * Math.sin(i * Math.PI / 6)} cy={-8 * Math.cos(i * Math.PI / 6)} r="1.900" fill={k} />)}</svg></StripButton>
              <StripButton aria-label="硬边"><Dot /></StripButton>
              <StripButton aria-label="柔边"><Dot $soft /></StripButton>
            </StripIcons>
          </ToolStrip>
          <Pill $mt={31}>特效动画</Pill>
          <Caption $mt={23} $gap={9}>图像动画: <button aria-label="帮助"><Help /></button></Caption>
          <StepRow mt={27} icons={[['新建', <FileAdd />], ['播放', <PlayIcon />], ['移动', <MoveIcon size={18} />], ['确认', <CheckIcon />]]} />
          <Caption $mt={26} $gap={9}>图层动画: <button aria-label="帮助"><Help /></button></Caption>
          <StepRow mt={24} icons={[['编辑', <PenLine />], ['播放', <PlayIcon />], ['移动', <MoveIcon size={18} />], ['确认', <CheckIcon />]]} />
          <Caption $mt={25} $gap={6}>将偏移量添加到动画: <button aria-label="帮助"><Help /></button></Caption>
          <Numbers>{[1, 2, 3, 4, 5].map(n => <button key={n}>{n}</button>)}</Numbers>
          <Pill $mt={32}>视差</Pill>
          <StepRow mt={21} icons={[['图层', <Diamond />], ['播放', <PlayIcon />], ['移动', <MoveIcon size={18} />]]} />
          <Reverse>反向动画</Reverse>
          <About>
            <h2>关于</h2>
            <p>欢迎, 亲爱的朋友们.</p>
          </About>
        </Scroll>
        <BottomNav>
          <NavButton><Ico w={26} h={24} vb="0 0 26 24"><path d="M1 0h24v19H1zM4 3v13h18V3zM9 20h8l2 4H7z" fillRule="evenodd" /></Ico>实用</NavButton>
          <NavButton><Ico w={24}><path fillRule="evenodd" d="M10 0h4l.6 3.400 2 .8L19.500 2 22 4.800l-2 2.700.9 2L24 10v4l-3.200.6-.8 2 2 2.700-2.700 2.700-2.700-2-2 .9L14 24h-4l-.6-3.200-2-.8-2.700 2L2 19.300l2-2.700-.8-2L0 14v-4l3.200-.6.8-2-2-2.700L4.700 2l2.700 2 2-.8zM12 8.300a3.700 3.700 0 100 7.400 3.700 3.700 0 000-7.400z" /></Ico>支持</NavButton>
          <NavButton $on><Help size={24} sw={2} />关于</NavButton>
        </BottomNav>
      </FloatMain>
      <ScrollTrack>
        <ArrowUp><Ico w={10} h={6} vb="0 0 10 6"><path d="M5 0l5 6H0z" /></Ico></ArrowUp>
        <Thumb />
        <TrackEnd />
        <TrackCorner />
      </ScrollTrack>
    </FloatBody>
    <FloatFoot><Grip /></FloatFoot>
  </Floating>
);

const dock: [string, React.ReactNode, boolean?][][] = [
  [['历史记录', <Ico w={24}><path d="M3 2.500h4v4H3zM3 10h4v4H3z" fill="none" stroke="currentColor" strokeWidth="1.500" /><path d="M2 17h6v6H2zM11 9l1-7 8 1-3 2.500C22 11 21 17 14 20c4-4 4-8 0-12z" /></Ico>]],
  [['3D', <Ico w={22}><path d="M8 2l6 3v7l-6 3-6-3V5z" fill="#999" stroke="currentColor" strokeWidth="1.500" /><path d="M2 5l6 3 6-3M8 8v7" fill="none" stroke="#444" /><path d="M17 2h6v5h-6zM17 9h6v5h-6zM1 18h22v5H1z" /></Ico>]],
  [
    ['画笔设置', <Ico w={26}><path d="M24 4c.5.500 0 1.500-.8 2.500L17 13l-2.500-2L21 4.800c1-1 2.500-1.400 3-.8zM13.500 12l3 2.500c.3 3.500-3 6.500-10 6 2.500-1.200 1.800-3 3-5.500.7-1.600 2.500-3 4-3zM0 1h2v2H0zM0 5h2v2H0zM0 9h2v2H0zM4 1h5v1.500H4zM4 5h5v1.500H4zM4 9h5v1.500H4z" /></Ico>],
    ['画笔', <Ico w={26}><path d="M0 6q5-6 11-1h12v3H11Q5 12 0 6zM3 15h12l8-4v11l-8-4H3z" /></Ico>],
  ],
  [
    ['字符', <Ico w={20} stroke sw={2.200}><path d="M1 21L8.500 3 16 21M4 15h9.500M21.500 1v22" /></Ico>],
    ['段落', <Ico w={20}><path d="M18.500 2v20H16V4h-2v18h-2.500v-9C6 13 3 11 3 7.500S6 2 11 2z" /></Ico>],
  ],
  [['布局', <Ico w={21} h={18} vb="0 0 21 18"><path d="M0 0h11v8H0zM0 10h11v8H0zM13 0h8v18h-8z" opacity=".8" /></Ico>]],
  [['Imagemotion', <Stripes w={29} h={15} />, true]],
];

const DockBar = () => (
  <Dock>
    <ColumnHead $right $pad={8}><Double left /></ColumnHead>
    {dock.map((g, i) => (
      <DockGroup key={i}>
        <Grip />
        {g.map(([n, icon, on]) => <DockButton key={n} aria-label={n} $on={on}>{icon}</DockButton>)}
      </DockGroup>
    ))}
  </Dock>
);

const RightPanels = () => (
  <Panels>
    <ColumnHead $right><Double /></ColumnHead>
    <Panel $h={311}>
      <PanelTabs>
        <PanelTab $on>颜色</PanelTab><PanelTab>色板</PanelTab>
        <MenuBtn aria-label="颜色菜单"><MenuIcon /></MenuBtn>
      </PanelTabs>
      <ColorBody>
        <SwatchSlot>
          <Swatches $ml={0}>
            <Chip aria-label="背景色" />
            <Chip $front aria-label="前景色" />
          </Swatches>
        </SwatchSlot>
        <Field><Ring /></Field>
        <HueMark><Ico w={7} h={9} vb="0 0 7 9"><path d="M0 0h3l4 4.500L3 9H0z" /></Ico></HueMark>
        <Hue />
      </ColorBody>
    </Panel>
    <Panel $h={310}>
      <PanelTabs>
        <PanelTab $on>库</PanelTab><PanelTab>调整</PanelTab>
        <MenuBtn aria-label="库菜单"><MenuIcon /></MenuBtn>
      </PanelTabs>
      <LibSearch><SearchIcon size={12} sw={3.500} /><input aria-label="搜索" placeholder="搜索当前库" /><Chevron size={13} /></LibSearch>
      <LibSelect>
        <SelectWrap $w={440} $h={23} $pad={6} $muted><select aria-label="库"><option></option></select><Chevron size={10} /></SelectWrap>
      </LibSelect>
      <LibView>
        <button>按类型查看 <Chevron size={10} /></button>
        <Grow />
        <ViewButton $on aria-label="网格"><Ico w={16} vb="0 0 16 16"><path d="M0 0h7v7H0zM9 0h7v7H9zM0 9h7v7H0zM9 9h7v7H9z" /></Ico></ViewButton>
        <ViewButton aria-label="列表"><Ico w={16} vb="0 0 16 16"><path d="M0 0h4v4H0zM0 6h4v4H0zM0 12h4v4H0zM6 1h10v2H6zM6 7h10v2H6zM6 13h10v2H6z" /></Ico></ViewButton>
      </LibView>
      <LibEmpty>
        <Ico w={56} h={40} vb="0 0 56 40" stroke sw={1.700}>
          <path d="M1 4l10 10M11 4L1 14M5 20q0 18 18 19h16c20-2 23-30 3-37-9-3-16 0-20 5h-6" />
          <path d="M26 33h-5C9 32 8 16 19 14q6-1 9 3l7 7M21 20l12 11c10 8 22-4 16-14-5-8-15-8-20-3" />
        </Ico>
        <p>要使用 Creative Cloud Libraries，您需要<br />登录 Creative Cloud 帐户。</p>
      </LibEmpty>
      <LibFoot>
        -- KB
        <button aria-label="云"><Ico w={24} h={18} vb="0 0 24 18"><path d="M4 17a4.500 4.500 0 010-8c0-4 4-5 5-4 2-6 11-5 11 1v11z" /><circle cx="18" cy="12.500" r="5.500" fill="#ddd" /><path d="M16 10.500l4 4M20 10.500l-4 4" stroke="#333" strokeWidth="1.500" /></Ico></button>
        <button aria-label="删除"><TrashIcon size={16} /></button>
      </LibFoot>
    </Panel>
    <Panel>
      <PanelTabs>
        <PanelTab $on>图层</PanelTab><PanelTab>通道</PanelTab><PanelTab>路径</PanelTab>
        <MenuBtn aria-label="图层菜单"><MenuIcon /></MenuBtn>
      </PanelTabs>
      <Row $h={41} $line $pt={5}>
        <SelectWrap $w={105} $h={26} $pad={24} $muted><select aria-label="筛选"><option>类型</option></select><Chevron size={8} /><SearchIcon size={13} sw={3} /></SelectWrap>
        <FilterIcons>
          <Ico w={15} h={13} vb="0 0 15 13"><path d="M.7.700h13.600v11.600H.7z" fill="none" stroke="currentColor" strokeWidth="1.300" /><path d="M2 10l3-5 2.500 3L10 4l3 6z" /></Ico>
          <AdjustIcon size={14} />
          <TypeIcon size={13} />
          <Ico w={14} vb="0 0 14 14" stroke sw={1.400}><path d="M2.500 2.500h9v9h-9z" /><path d="M1 1h3v3H1zM10 1h3v3h-3zM1 10h3v3H1zM10 10h3v3h-3z" /></Ico>
          <Ico w={14} vb="0 0 14 14"><path d="M0 6h8v8H0z" /><path d="M4.500 5V.700H10L13.300 4v8H9M9.500 1v3.500H13" fill="none" stroke="currentColor" strokeWidth="1.400" /></Ico>
          <Toggle type="checkbox" aria-label="筛选开关" />
        </FilterIcons>
      </Row>
      <Row $h={36} $line>
        <SelectWrap $w={146} $h={26} $pad={9} $muted><select aria-label="混合模式"><option>正常</option></select><Chevron size={8} /></SelectWrap>
        <Amount $ml={9}>不透明度: <input defaultValue="100%" /></Amount>
        <Spin aria-label="不透明度选项"><Chevron size={6} /></Spin>
      </Row>
      <Row $h={39} $pb={4}>
        <Group $pl={3}>锁定:</Group>
        <LockIcons>
          <Ico w={15} vb="0 0 15 15"><path d="M.7.700h13.600v13.600H.7z" fill="none" stroke="currentColor" strokeWidth="1.400" /><path d="M1 1h4v4H1zM9 1h4v4H9zM5 5h4v4H5zM1 9h4v4H1zM9 9h4v4H9z" /></Ico>
          <BrushIcon size={17} />
          <MoveIcon size={16} />
          <Ico w={17} h={15} vb="0 0 17 15" stroke sw={1.500}><path d="M0 3h9M3 0v15M0 12h14M14 15V6l-4-4H7M14 0v2M16 3h1M16 12h1" /></Ico>
          <Ico w={13} h={15} vb="0 0 13 15"><path d="M0 6h13v9H0z" /><path d="M3 7V4q0-3 3.500-3T10 4v3" fill="none" stroke="currentColor" strokeWidth="1.800" /><circle cx="6.500" cy="10.500" r="1.500" fill="#444" /></Ico>
        </LockIcons>
        <Amount $ml={0}>填充: <input defaultValue="100%" /></Amount>
        <Spin aria-label="填充选项"><Chevron size={6} /></Spin>
      </Row>
      <Layers>
        <Layer>
          <Eye aria-label="可见性"><Ico w={16} h={11} vb="0 0 16 11"><path fillRule="evenodd" d="M0 5.500Q3.500 0 8 0t8 5.500Q12.500 11 8 11T0 5.500zM8 2a3.500 3.500 0 100 7 3.500 3.500 0 000-7z" /><circle cx="8" cy="5.500" r="1.800" /></Ico></Eye>
          <LayerFace>
            <LayerThumb />
            背景
            <Grow />
            <Ico w={12} h={15} vb="0 0 12 15"><path d="M.7 6.200h10.600v8H.7zM3 6V4q0-3 3-3t3 3v2" fill="none" stroke="currentColor" strokeWidth="1.400" /><circle cx="6" cy="10" r="1.500" /></Ico>
          </LayerFace>
        </Layer>
      </Layers>
      <LayerFoot>
        <IconButton $dim aria-label="链接"><Ico w={18} h={10} vb="0 0 18 10" stroke sw={1.800}><path d="M8 2.500Q7 1 5 1 1 1 1 5t4 4q2 0 3-1.500M10 2.500Q11 1 13 1q4 0 4 4t-4 4q-2 0-3-1.500M5 5h8" /></Ico></IconButton>
        <IconButton $dim aria-label="图层样式"><WithArrow><Fx>fx</Fx></WithArrow></IconButton>
        <IconButton aria-label="蒙版"><Ico w={16} h={12} vb="0 0 16 12"><path fillRule="evenodd" d="M0 0h16v12H0zM8 2.500a3.500 3.500 0 100 7 3.500 3.500 0 000-7z" /></Ico></IconButton>
        <IconButton aria-label="调整图层"><WithArrow><AdjustIcon size={15} /></WithArrow></IconButton>
        <IconButton aria-label="新建组"><Ico w={16} h={12} vb="0 0 16 12"><path d="M0 0h6l1.500 2H16v10H0z" /></Ico></IconButton>
        <IconButton aria-label="新建图层"><Ico w={14} h={13} vb="0 0 14 13" stroke sw={1.800}><path d="M1 1h12v11H7L1 7zM1 6.500h6V12" /></Ico></IconButton>
        <IconButton $dim aria-label="删除图层"><TrashIcon size={15} /></IconButton>
      </LayerFoot>
    </Panel>
  </Panels>
);

const TaskbarView = () => (
  <Taskbar>
    <App62 aria-label="开始"><Ico w={21} h={22} vb="0 0 21 22"><path d="M0 3l9-1.200v8.700H0zM10 1.600L21 0v10.500H10zM0 11.500h9v8.700L0 19zM10 11.500h11V22l-11-1.600z" /></Ico></App62>
    <App62 aria-label="文件资源管理器"><svg width="29" height="24" viewBox="0 0 29 24" aria-hidden="true"><path d="M1 1h12v5H1z" fill="#d29d2a" /><path d="M0 5h29v17H0z" fill="#fbd368" /><path d="M5 24v-9q0-2 2-2h14q2 0 2 2v9h-5v-6h-8v6z" fill="#3f8fc8" /></svg></App62>
    <App62 aria-label="Chrome"><svg width="28" height="28" viewBox="-14 -14 28 28" aria-hidden="true"><circle r="14" fill="#4fa655" /><path d="M0-14A14 14 0 0112.100-7H0A7 7 0 00-6.500-2.500L-12.100-7A14 14 0 010-14z" fill="#da4a3d" /><path d="M12.100-7A14 14 0 010 14l6-10.500A7 7 0 005-7z" fill="#f9cb3f" /><circle r="6.500" fill="#f4f4f4" /><circle r="5" fill="#4487ee" /></svg></App62>
    <App62 aria-label="搜狗浏览器"><svg width="28" height="28" viewBox="0 0 28 28" aria-hidden="true"><circle cx="14" cy="14" r="13.500" fill="#3b88dc" stroke="#eef" /><path d="M20 6C9 1 5 9 12 13c8 4 8 9-4 10" fill="none" stroke="#fff" strokeWidth="5" /></svg></App62>
    <App62 aria-label="360浏览器"><svg width="27" height="28" viewBox="0 0 27 28" aria-hidden="true"><circle cx="13.500" cy="14" r="12.500" fill="#f3faee" /><path d="M7 15h15c1-12-15-13-16-1-1 11 12 11 15 4" fill="none" stroke="#61b52b" strokeWidth="4.500" /><path d="M2 27Q0 10 24 1" fill="none" stroke="#4f9f28" strokeWidth="2" /></svg></App62>
    <App62 aria-label="印象笔记"><svg width="28" height="28" viewBox="0 0 28 28" aria-hidden="true"><circle cx="14" cy="14" r="14" fill="#20b93f" /><path d="M6 11l4-5q7-2 10 1c2 4 2 10 0 15-1 2-5 1-5-1s2-2 3-1c0-3-3-2-5-1-4 2-7-2-7-8z" fill="#252f28" /></svg></App62>
    <App62 $on aria-label="Photoshop"><PsLogo $size={28}>Ps</PsLogo></App62>
    <App62 aria-label="图片编辑"><svg width="28" height="28" viewBox="0 0 28 28" aria-hidden="true"><path d="M1 4l17-3 4 20L6 26z" fill="#e9e7a0" stroke="#a0b860" /><path d="M3 6l14-3 3 13-14 3z" fill="#3a9fe0" /><path d="M6 15l8-6 5 8-12 3z" fill="#b7e6f4" /><path d="M15 15l8 8" stroke="#a9541d" strokeWidth="5" /><path d="M21 20l4-4 3 7-5 4z" fill="#eee" stroke="#a33" /></svg></App62>
    <App62 aria-label="Premiere"><PsLogo $size={28} $violet>Pr</PsLogo></App62>
    <Tray>
      <button aria-label="显示隐藏图标"><Ico w={16} h={9} vb="0 0 16 9" stroke sw={1.500}><path d="M1 8l7-7 7 7" /></Ico></button>
      <button aria-label="麦克风"><Ico w={14} h={20} vb="0 0 14 20"><rect x="3" y="0" width="8" height="14" rx="1" /><path d="M1 10v5h12v-5M7 15v4M3 19h8" fill="none" stroke="currentColor" strokeWidth="1.300" /></Ico></button>
      <button aria-label="电池"><Ico w={20} h={14} vb="0 0 20 14"><path d="M6 3h12v2.500h1.500v4H18V12H5V8h1z" /><path d="M1.500 0v4h4V0M3.500 4v6H6" fill="none" stroke="currentColor" strokeWidth="1.500" /></Ico></button>
      <button aria-label="网络"><Ico w={20} h={16} vb="0 0 20 16" stroke sw={1.400}><path d="M6 1h13v10H4V6M11 11v4M7 15h9M1 1h4v4H1zM3 5v5" /></Ico></button>
      <button aria-label="音量"><Ico w={20} h={16} vb="0 0 20 16" stroke sw={1.300}><path d="M1 5h3l4-4v14l-4-4H1zM10.500 5.500q1.500 2.500 0 5M13.500 3.500q3 4.500 0 9" /><path d="M16.500 1.500q4.500 6.500 0 13" stroke="#999" /></Ico></button>
      <button aria-label="输入法"><Ico w={17} h={18} vb="0 0 17 18" stroke sw={1}><path d="M.500 4h6.500V.500h3V4h6.500v8.500H10v5H7v-5H.500zM3 6.500h4V10H3zM10 6.500h4V10h-4z" /></Ico></button>
      <button aria-label="搜狗输入法"><svg width="20" height="19" viewBox="0 0 20 19" aria-hidden="true"><path d="M0 3l17-3 3 15-16 4z" fill="#e5562a" /><path d="M14 5c-5-2-9 1-6 4 4 2 8 4 2 6H6" fill="none" stroke="#fff" strokeWidth="2.600" /></svg></button>
    </Tray>
    <Clock>15:25<br />2020/5/8</Clock>
    <News aria-label="新闻"><Ico w={20} h={19} vb="0 0 20 19" stroke sw={1.500}><path d="M4 1h15v17H1V5h3zM4 5v13M7.500 6h8M7.500 10h8M7.500 14h5" /></Ico><Badge>3</Badge></News>
    <Notice aria-label="通知"><Ico w={20} h={20} vb="0 0 20 20"><path d="M0 0h20v15H8l-4 4v-4H0z" /><path d="M4 4h12M4 7.500h12M4 11h8" stroke="#d3dae2" strokeWidth="1.500" /><circle cx="15" cy="15" r="4.500" stroke="#d3dae2" /><path d="M17 12q1 5-4 5" fill="none" stroke="#fff" /></Ico></Notice>
    <EdgeHandle />
  </Taskbar>
);

export default function App() {
  return (
    <Screen>
      <Global />
      <MenuBar>
        <LogoSlot><PsLogo $size={20}>Ps</PsLogo></LogoSlot>
        <MenuNav>{menus.map(m => <MenuButton key={m}>{m}</MenuButton>)}</MenuNav>
        <WinControls>
          <WinButton aria-label="最小化"><Ico w={13} h={4} vb="0 0 13 4"><path d="M0 2h13v4H0z" /></Ico></WinButton>
          <WinButton aria-label="还原"><Ico w={18} h={15} vb="0 0 18 15" stroke sw={3}><path d="M7 4V1.500h9.500v8H12M1.500 5.500h8v8h-8z" /></Ico></WinButton>
          <WinButton aria-label="关闭窗口"><Ico w={12} h={11} vb="0 0 12 11" stroke sw={3}><path d="M1 0l10 11M11 0L1 11" /></Ico></WinButton>
        </WinControls>
      </MenuBar>
      <OptionsBar />
      <Work>
        <ToolsBar />
        <Document />
        <Imagemotion />
        <DockBar />
        <RightPanels />
      </Work>
      <TaskbarView />
    </Screen>
  );
}
